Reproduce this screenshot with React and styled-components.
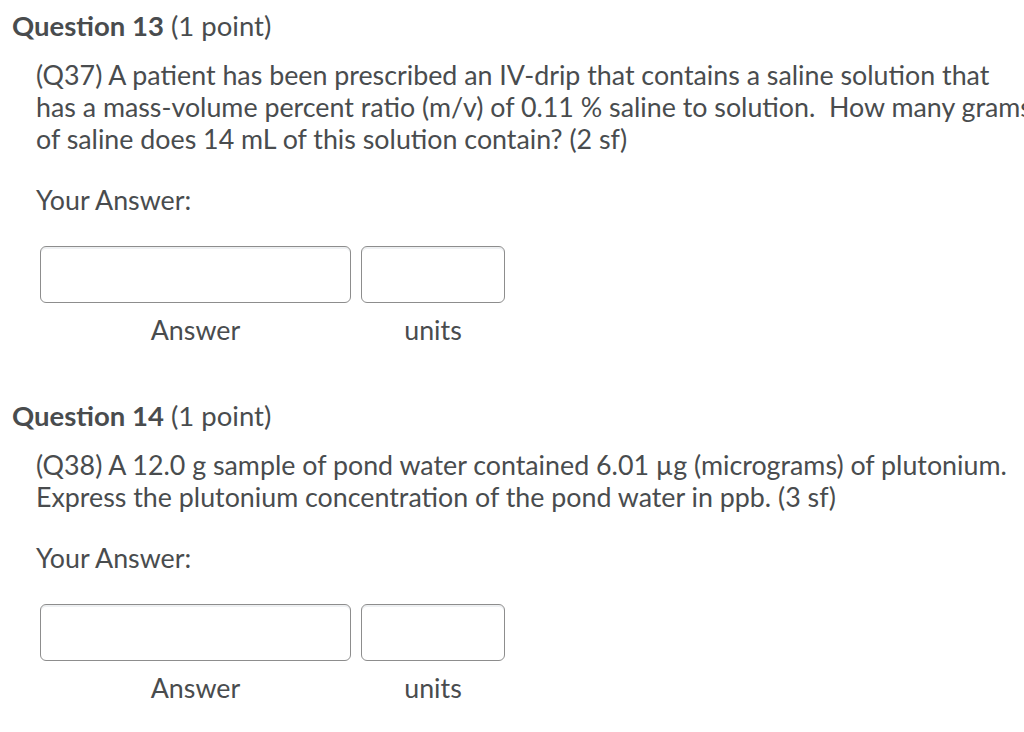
import React from 'react';
import styled, { createGlobalStyle } from 'styled-components';

const GlobalStyle = createGlobalStyle`
  html, body {
    margin: 0;
    padding: 0;
    background: #ffffff;
    overflow: hidden;
  }
  body {
    font-family: Lato, "Open Sans", "Liberation Sans", sans-serif;
    color: #494c4e;
  }
`;

const Page = styled.div`
  width: 1024px;
  height: 732px;
  overflow: hidden;
  padding: 10px 0 0 12px;
  box-sizing: border-box;
`;

const Section = styled.section`
  margin-bottom: ${(p) => p.gap || 0}px;
`;

const Header = styled.h2`
  margin: 0;
  font-size: 27.5px;
  line-height: 32px;
  font-weight: 400;
  color: #494c4e;
  white-space: nowrap;
`;

const Strong = styled.span`
  font-weight: 700;
`;

const Body = styled.div`
  padding-left: 24px;
  margin-top: 17px;
`;

const Prompt = styled.p`
  margin: 0;
  font-size: 26.8px;
  line-height: 32px;
  white-space: pre;
`;

const YourAnswer = styled.p`
  margin: 29px 0 0;
  font-size: 26.8px;
  line-height: 32px;
`;

const Fields = styled.div`
  display: flex;
  gap: 10px;
  margin: 30px 0 0 4px;
`;

const Field = styled.label`
  display: flex;
  flex-direction: column;
  align-items: center;
  width: ${(p) => p.w}px;
`;

const Input = styled.input`
  width: 100%;
  height: 57px;
  box-sizing: border-box;
  border: 1px solid #8d8d8d;
  border-radius: 6px;
  box-shadow: inset 0 2px 0 #eef0f2;
  background: #fff;
  outline: none;
`;

const Caption = styled.span`
  margin-top: 11px;
  font-size: 26.8px;
  line-height: 32px;
`;

const AnswerRow = () => (
  <Fields>
    <Field w={311}>
      <Input type="text" />
      <Caption>Answer</Caption>
    </Field>
    <Field w={144}>
      <Input type="text" />
      <Caption>units</Caption>
    </Field>
  </Fields>
);

const Question = ({ num, lines, gap }) => (
  <Section gap={gap}>
    <Header>
      <Strong>Question {num}</Strong> (1 point)
    </Header>
    <Body>
      {lines.map((l) => (
        <Prompt key={l}>{l}</Prompt>
      ))}
      <YourAnswer>Your Answer:</YourAnswer>
      <AnswerRow />
    </Body>
  </Section>
);

export default function App() {
  return (
    <Page>
      <GlobalStyle />
      <Question
        num={13}
        gap={54}
        lines={[
          '(Q37) A patient has been prescribed an IV-drip that contains a saline solution that',
          'has a mass-volume percent ratio (m/v) of 0.11 % saline to solution.  How many grams',
          'of saline does 14 mL of this solution contain? (2 sf)',
        ]}
      />
      <Question
        num={14}
        lines={[
          '(Q38) A 12.0 g sample of pond water contained 6.01 µg (micrograms) of plutonium.',
          'Express the plutonium concentration of the pond water in ppb. (3 sf)',
        ]}
      />
    </Page>
  );
}
